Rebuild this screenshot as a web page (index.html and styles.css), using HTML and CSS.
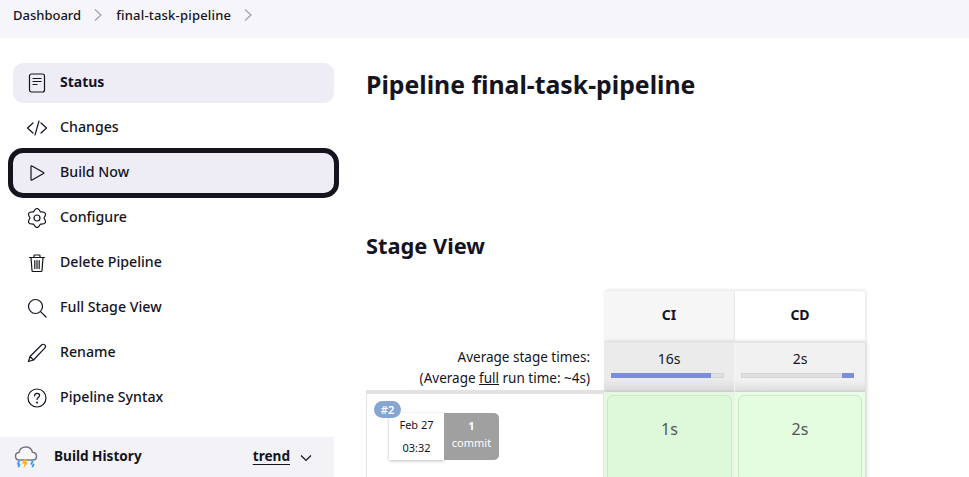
FILE: index.html
```html
<!DOCTYPE html>
<html lang="en">
<head>
<meta charset="utf-8">
<title>final-task-pipeline</title>
<link rel="stylesheet" href="styles.css">
</head>
<body>
<nav class="crumbs">
  <span class="crumb">Dashboard</span>
  <svg class="chev" viewBox="0 0 8 14"><path d="M1 1.500 7 7l-6 5.500"/></svg>
  <span class="crumb long">final-task-pipeline</span>
  <svg class="chev" viewBox="0 0 8 14"><path d="M1 1.500 7 7l-6 5.500"/></svg>
</nav>
<div class="page">
  <aside class="side">
    <ul class="menu">
      <li class="item active">
        <svg class="ico" viewBox="0 0 20 20"><rect x="2.500" y="1" width="15" height="18" rx="2"/><path d="M6 5.500h8M6 8.500h8M6 11.500h4"/></svg>
        <span>Status</span>
      </li>
      <li class="item">
        <svg class="ico" viewBox="0 0 20 20"><path d="M6 5 .5 10 6 15M14 5l5.500 5L14 15M12 3 8 17"/></svg>
        <span>Changes</span>
      </li>
      <li class="item focus">
        <svg class="ico" viewBox="0 0 20 20"><path d="M4 3.500v13c0 .6.500.9 1 .6l11.500-6.500c.5-.3.5-.9 0-1.200L5 2.900c-.5-.3-1 0-1 .6z"/></svg>
        <span>Build Now</span>
      </li>
      <li class="item">
        <svg class="ico" viewBox="0 0 20 20"><circle cx="10" cy="10" r="3"/><path d="M17 10Q21.260 16.500 13.500 16.060 10 23 6.500 16.060-1.260 16.500 3 10-1.260 3.500 6.500 3.940 10-3 13.500 3.940 21.260 3.500 17 10z"/></svg>
        <span>Configure</span>
      </li>
      <li class="item">
        <svg class="ico" viewBox="0 0 20 20"><path d="M2.500 4.500h15M7 4.500V2.800c0-.5.400-.8.800-.8h4.400c.4 0 .8.300.8.800v1.700M4 4.500l1 13c0 .6.500 1 1 1h8c.5 0 1-.4 1-1l1-13M7.800 7.500v8M10 7.500v8M12.200 7.500v8"/></svg>
        <span>Delete Pipeline</span>
      </li>
      <li class="item">
        <svg class="ico" viewBox="0 0 20 20"><circle cx="8.500" cy="8.500" r="7"/><path d="m13.800 13.800 5.200 5.200"/></svg>
        <span>Full Stage View</span>
      </li>
      <li class="item">
        <svg class="ico" viewBox="0 0 20 20"><path d="M1.500 18.500 3 13.500 14.500 2c1-1 2.500-1 3.300-.1.900.9.800 2.300-.1 3.200L6.500 17zM3 13.500l3.500 3.500"/></svg>
        <span>Rename</span>
      </li>
      <li class="item">
        <svg class="ico" viewBox="0 0 20 20"><circle cx="10" cy="10" r="9"/><path d="M7.500 7.800c0-1.500 1.100-2.500 2.600-2.500s2.500 1 2.500 2.200c0 1.900-2.600 2-2.600 4"/><path class="dot" d="M10 14.300v.4"/></svg>
        <span>Pipeline Syntax</span>
      </li>
    </ul>
    <div class="history">
      <svg class="storm" viewBox="0 0 24 24">
        <path class="cloud" d="M5.500 15C3 15 1.500 13.300 1.500 11.200c0-2 1.600-3.500 3.500-3.600C5.700 4.200 8.500 2 11.800 2c3.400 0 6 2.300 6.700 5.300 2.300.2 4 1.800 4 3.900 0 2.100-1.600 3.800-4 3.800z"/>
        <path class="bolt" d="M13 14.500h-3.500l-1.300 4.300h2.400L9.500 23l4.700-5.600h-2.400z"/>
        <path class="rain" d="M5 16.500 3.800 18.800M5.500 19.500l-1 2M18.500 16.500l-1.200 2.300M19.500 19.500l-1 2"/>
      </svg>
      <span class="history-title">Build History</span>
      <span class="trend">trend</span>
      <svg class="down" viewBox="0 0 12 8"><path d="M1 1.500 6 6.500l5-5"/></svg>
    </div>
  </aside>
  <main class="main">
    <h1 class="title">Pipeline final-task-pipeline</h1>
    <h2 class="subtitle">Stage View</h2>
    <div class="stage">
      <div class="blank"></div>
      <div class="head shade">CI</div>
      <div class="head">CD</div>
      <div class="avg-label">Average stage times:<br>(Average <u>full</u> run time: ~4s)</div>
      <div class="avg dark">
        <span>16s</span>
        <div class="track"><div class="fill" style="width:90%"></div></div>
      </div>
      <div class="avg">
        <span>2s</span>
        <div class="track end"><div class="fill" style="width:11%"></div></div>
      </div>
      <div class="run">
        <div class="card">
          <span class="badge">#2</span>
          <div class="date"><span>Feb 27</span><span>03:32</span></div>
          <div class="commit"><b>1</b><span>commit</span></div>
        </div>
      </div>
      <div class="cell-wrap shade"><div class="cell">1s</div></div>
      <div class="cell-wrap"><div class="cell">2s</div></div>
    </div>
  </main>
</div>
</body>
</html>
```
FILE: styles.css
```css
* { box-sizing: border-box; }
html, body { margin: 0; height: 477px; overflow: hidden; }
body {
  background: #fff;
  color: #14141f;
  font-family: "Noto Sans", "Open Sans", sans-serif;
  font-size: 14px;
}
.crumbs {
  height: 38px;
  background: #f6f6fa;
  display: flex;
  align-items: center;
  padding: 0 0 8px 13px;
  font-weight: 500;
  font-size: 13px;
}
.long { letter-spacing: .2px; }
.chev { width: 8px; height: 14px; margin: 0 14px 0 13px; fill: none; stroke: #a0a0aa; stroke-width: 1.200; }
.page { display: flex; }
.side { width: 334px; padding-top: 25px; flex: none; }
.menu { list-style: none; margin: 0 0 0 13px; padding: 0; display: flex; flex-direction: column; gap: 5px; }
.item {
  height: 40px;
  display: flex;
  align-items: center;
  gap: 13px;
  padding-left: 14px;
  border-radius: 10px;
  font-weight: 500;
  font-size: 14.200px;
}
.item span { margin-bottom: 4px; }
.active { background: #eeedf6; font-weight: 700; font-size: 14px; }
.focus { background: #eeedf6; box-shadow: 0 0 0 5px #14141f; }
.ico { width: 20px; height: 20px; fill: none; stroke: #14141f; stroke-width: 1.200; stroke-linecap: round; stroke-linejoin: round; flex: none; margin-bottom: 1px; }
.dot { stroke-width: 1.800; }
.history {
  margin-top: 19px;
  height: 40px;
  background: #f2f2f7;
  display: flex;
  align-items: center;
  padding: 0 22px 0 14px;
  font-weight: 700;
  font-size: 13.600px;
}
.history span { margin-bottom: 4px; }
.storm { width: 24px; height: 24px; flex: none; margin-right: 16px; fill: none; }
.cloud { stroke: #77778c; stroke-width: 1.500; fill: #f8f8fc; }
.bolt { fill: #f7b516; }
.rain { stroke: #3b9be8; stroke-width: 1.800; stroke-linecap: round; }
.history-title { flex: 1; }
.trend { text-decoration: underline; text-underline-offset: 3px; }
.down { width: 12px; height: 8px; margin-left: 10px; fill: none; stroke: #14141f; stroke-width: 1.200; margin-top: 2px; }
.main { flex: 1; padding: 30px 0 0 32px; min-width: 0; }
.title { margin: 0; font-size: 24.800px; line-height: 32px; font-weight: 700; }
.subtitle { margin: 131px 0 0; font-size: 21.800px; line-height: 30px; font-weight: 700; }
.stage {
  margin-top: 30px;
  display: grid;
  grid-template-columns: 238px 131px 130px;
  grid-template-rows: 50px 51px 90px;
  width: 500px;
  font-size: 14px;
}
.head {
  display: flex;
  align-items: center;
  justify-content: center;
  padding-bottom: 4px;
  font-weight: 700;
  font-size: 14px;
  box-shadow: 1px -1px 3px rgba(0,0,0,.12);
  background: #fff;
}
.shade { background: #f6f6f6; border-right: 1px solid #eee; }
.avg-label { text-align: right; padding: 6px 14px 0 0; line-height: 21px; font-size: 13.500px; border-bottom: 2px solid #e2e2e2; }
.avg {
  background: linear-gradient(#f1f1f1 75%, #ddd);
  text-align: center;
  padding-top: 6px;
  font-size: 14px;
  line-height: 20px;
  border-top: 2px solid #e4e4e4;
  box-shadow: 2px 0 3px rgba(0,0,0,.15);
}
.dark { background: linear-gradient(#ebebeb 75%, #d8d8d8); border-right: 1px solid #f6f6f6; }
.track { height: 5px; margin: 4px 11px 0 6px; background: #e0e0e0; border: 1px solid #d4d4d4; display: flex; }
.dark .track { margin: 4px 10px 0 7px; }
.track.end { justify-content: flex-end; }
.fill { background: #7a8fd8; margin: -1px; height: 5px; }
.run { border: 1px solid #e6e6e6; border-top: 2px solid #e2e2e2; position: relative; padding: 19px 0 0 22px; }
.card { display: flex; position: relative; width: 110px; height: 47px; }
.badge {
  position: absolute;
  left: -15px;
  top: -12px;
  width: 27px;
  height: 17px;
  border-radius: 9px;
  background: #86a5d3;
  color: #fff;
  font-size: 11px;
  font-weight: 600;
  line-height: 17px;
  text-align: center;
}
.date {
  width: 55px;
  background: #fff;
  box-shadow: 0 1px 3px rgba(0,0,0,.25);
  display: flex;
  flex-direction: column;
  align-items: center;
  justify-content: space-between;
  padding: 3px 0 4px;
  font-size: 11px;
  line-height: 17px;
}
.commit {
  width: 55px;
  background: #a0a0a0;
  border-radius: 0 5px 5px 0;
  color: #fff;
  display: flex;
  flex-direction: column;
  align-items: center;
  padding-top: 4px;
  font-size: 11px;
  line-height: 17px;
}
.cell-wrap { background: #eafbe6; padding: 3px; box-shadow: 2px 0 3px rgba(0,0,0,.15); }
.cell-wrap.shade { border-right: none; background: #e6f8e2; }
.cell {
  height: 87px;
  background: #e4fde0;
  border: 1px solid #cfe6cb;
  border-radius: 6px;
  display: flex;
  align-items: center;
  justify-content: center;
  padding-bottom: 20px;
  color: #555;
  font-size: 16px;
}
.cell-wrap.shade .cell { background: #def9da; }
```
